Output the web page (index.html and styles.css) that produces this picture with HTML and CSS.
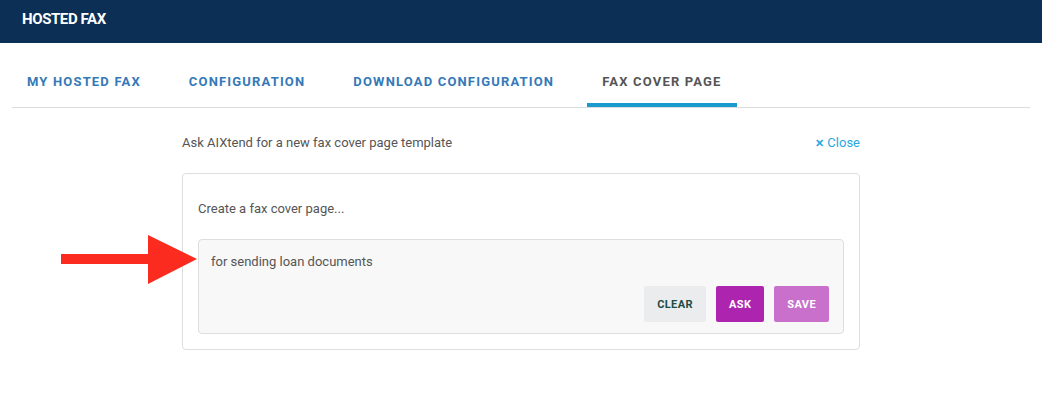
FILE: index.html
```html
<!DOCTYPE html>
<html lang="en">
<head>
    <meta charset="UTF-8">
    <meta name="viewport" content="width=device-width, initial-scale=1.0">
    <title>Hosted Fax</title>
    <link rel="stylesheet" href="styles.css">
</head>
<body>
    <header class="topbar">HOSTED FAX</header>

    <nav class="tabs">
        <a class="tab">MY HOSTED FAX</a>
        <a class="tab">CONFIGURATION</a>
        <a class="tab">DOWNLOAD CONFIGURATION</a>
        <a class="tab active">FAX COVER PAGE</a>
    </nav>

    <main class="content">
        <div class="title-row">
            <span class="title">Ask AIXtend for a new fax cover page template</span>
            <a class="close"><span class="close-x">&#x2715;</span> Close</a>
        </div>

        <div class="card">
            <div class="card-label">Create a fax cover page...</div>
            <div class="prompt-box">
                <div class="prompt-text">for sending loan documents</div>
                <div class="actions">
                    <button class="btn btn-clear">CLEAR</button>
                    <button class="btn btn-ask">ASK</button>
                    <button class="btn btn-save">SAVE</button>
                </div>
            </div>
        </div>
    </main>

    <!-- flecha de anotación -->
    <svg class="arrow" width="140" height="52" viewBox="0 0 140 52">
        <rect x="0" y="19" width="90" height="10" fill="#fb2b1f"/>
        <polygon points="87,0 136,24 87,49" fill="#fb2b1f"/>
    </svg>
</body>
</html>
```

FILE: styles.css
```css
body {
    margin: 0;
    font-family: Roboto, "Liberation Sans", Arial, sans-serif;
    background: #fff;
    color: #555;
}
.topbar {
    height: 43px;
    background: #0b2f55;
    color: #fff;
    font-size: 15px;
    font-weight: 700;
    letter-spacing: -0.4px;
    line-height: 38px;
    padding-left: 22px;
}
.tabs {
    display: flex;
    gap: 18px;
    margin: 0 12px;
    border-bottom: 1px solid #dcdcdc;
}
.tab {
    padding: 31px 15px 13px;
    font-size: 13px;
    font-weight: 700;
    line-height: 16px;
    letter-spacing: 1.17px;
    color: #3479b8;
    border-bottom: 4px solid transparent;
    cursor: pointer;
}
.tab.active {
    color: #555;
    border-bottom-color: #1b9ad0;
}
.content {
    width: 678px;
    margin: 0 auto;
}
.title-row {
    display: flex;
    justify-content: space-between;
    margin-top: 25px;
    font-size: 13px;
    line-height: 20px;
}
.close {
    color: #2aa8df;
    font-size: 13px;
    cursor: pointer;
}
.close-x {
    font-size: 11px;
    font-weight: 700;
}
.card {
    margin-top: 19px;
    border: 1px solid #dedede;
    border-radius: 4px;
    padding: 16px 15px 15px;
}
.card-label {
    margin-top: 10px;
    margin-bottom: 21px;
    font-size: 13px;
    line-height: 18px;
    color: #555;
}
.prompt-box {
    background: #f8f8f8;
    border: 1px solid #dedede;
    border-radius: 4px;
    padding: 12px 14px 11px 12px;
}
.prompt-text {
    font-size: 13px;
    line-height: 20px;
    color: #555;
}
.actions {
    display: flex;
    justify-content: flex-end;
    gap: 10px;
    margin-top: 14px;
}
.btn {
    height: 36px;
    border: none;
    border-radius: 2px;
    font-family: Roboto, "Liberation Sans", Arial, sans-serif;
    font-size: 11px;
    font-weight: 700;
    letter-spacing: 0.4px;
    padding: 0 13px;
    cursor: pointer;
}
.btn-clear {
    background: #eaecee;
    color: #1d4d45;
}
.btn-ask {
    background: #ad24ae;
    color: #fff;
}
.btn-save {
    background: #c970cc;
    color: #fff;
}
.arrow {
    position: absolute;
    left: 61px;
    top: 235px;
}
```
